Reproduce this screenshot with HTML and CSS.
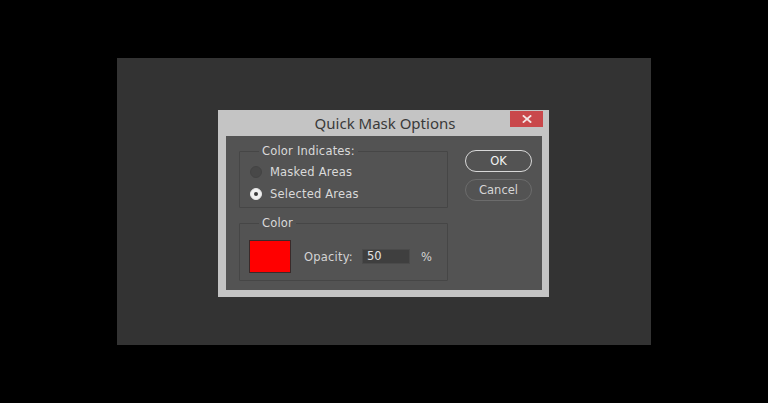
FILE: index.html
```html
<!DOCTYPE html>
<html>
<head>
<meta charset="utf-8">
<link rel="stylesheet" href="styles.css">
</head>
<body>
<div class="stage">
  <div class="panel">
    <div class="dialog">
      <div class="titlebar">
        <span class="title">Quick Mask Options</span>
        <button class="close" aria-label="Close">
          <svg width="10" height="8" viewBox="0 0 10 8"><path d="M1.5 1 L8.5 7 M8.5 1 L1.5 7" stroke="#f4e4e4" stroke-width="1.8" stroke-linecap="square"/></svg>
        </button>
      </div>
      <div class="body">
        <div class="groups">
          <fieldset class="group group-ind">
            <legend>Color Indicates:</legend>
            <div class="radios">
              <label class="radio"><span class="dot"></span>Masked Areas</label>
              <label class="radio"><span class="dot on"></span>Selected Areas</label>
            </div>
          </fieldset>
          <fieldset class="group group-color">
            <legend>Color</legend>
            <div class="color-row">
              <span class="swatch"></span>
              <span class="lbl">Opacity:</span>
              <span class="field">50</span>
              <span class="pct">%</span>
            </div>
          </fieldset>
        </div>
        <div class="buttons">
          <button class="btn ok">OK</button>
          <button class="btn cancel">Cancel</button>
        </div>
      </div>
    </div>
  </div>
</div>
</body>
</html>
```

FILE: styles.css
```css
* { box-sizing: border-box; }
html, body { margin: 0; padding: 0; }
body {
  background: #000;
  width: 768px;
  height: 403px;
  overflow: hidden;
  font-family: "DejaVu Sans", Verdana, sans-serif;
}
.stage {
  padding: 58px 0 0 117px;
}
.panel {
  width: 534px;
  height: 287px;
  background: #333333;
  padding: 52px 0 0 101px;
}
.dialog {
  width: 331px;
  height: 187px;
  background: #c4c4c4;
  padding: 0 7px 7px 8px;
  display: flex;
  flex-direction: column;
}
.titlebar {
  position: relative;
  height: 26px;
  display: flex;
  align-items: center;
  justify-content: center;
}
.title {
  font-family: "Noto Sans", "Open Sans", sans-serif;
  font-size: 15px;
  color: #3a3a3a;
  margin-left: 2px;
}
.close {
  position: absolute;
  top: 1px;
  right: -1px;
  width: 33px;
  height: 16px;
  border: 0;
  padding: 0;
  background: #c9484b;
  display: flex;
  align-items: center;
  justify-content: center;
}
.body {
  flex: 1;
  background: #535353;
  display: flex;
  padding: 8px 10px 0 13px;
  gap: 17px;
}
.groups {
  display: flex;
  flex-direction: column;
  gap: 8px;
  width: 209px;
}
.group {
  margin: 0;
  padding: 0;
  border: 1px solid #464646;
  border-radius: 1px;
  min-width: 0;
}
.group legend {
  margin-left: 19px;
  padding: 0 3px;
  font-size: 11.5px;
  letter-spacing: 0.2px;
  line-height: 15px;
  color: #dadada;
}
.radios {
  display: flex;
  flex-direction: column;
  gap: 8px;
  padding: 6px 0 6px 10px;
}
.radio {
  display: flex;
  align-items: center;
  height: 14px;
  font-size: 11.5px;
  letter-spacing: 0.2px;
  color: #dadada;
}
.dot {
  width: 12px;
  height: 12px;
  border-radius: 50%;
  background: #484848;
  border: 1px solid #444;
  margin-right: 8px;
  flex: none;
}
.dot.on {
  background: #f0f0f0;
  border: 1px solid #e6e6e6;
  position: relative;
}
.dot.on::after {
  content: "";
  position: absolute;
  left: 3px;
  top: 3px;
  width: 4px;
  height: 4px;
  border-radius: 50%;
  background: #3a3a3a;
}
.color-row {
  display: flex;
  align-items: center;
  padding: 9px 0 7px 9px;
}
.swatch {
  width: 42px;
  height: 33px;
  background: #ff0000;
  border: 1px solid #3a2a2a;
  margin-right: 13px;
}
.lbl {
  font-size: 11.5px;
  letter-spacing: 0.2px;
  color: #d4d4d4;
  margin-right: 9px;
}
.field {
  width: 48px;
  height: 15px;
  background: #3f3f3f;
  border: 1px solid #4a4a4a;
  font-size: 11.5px;
  line-height: 13px;
  color: #e4e4e4;
  padding-left: 4px;
  margin-right: 11px;
}
.pct {
  font-size: 11.5px;
  color: #d4d4d4;
}
.buttons {
  display: flex;
  flex-direction: column;
  gap: 7px;
  padding-top: 6px;
}
.btn {
  width: 67px;
  height: 22px;
  border-radius: 11px;
  background: #535353;
  font-family: "DejaVu Sans", Verdana, sans-serif;
  font-size: 11.5px;
  padding: 0;
}
.btn.ok {
  border: 1.5px solid #d8d8d8;
  color: #f2f2f2;
}
.btn.cancel {
  border: 1.5px solid #6c6c6c;
  color: #d6d6d6;
}
```
